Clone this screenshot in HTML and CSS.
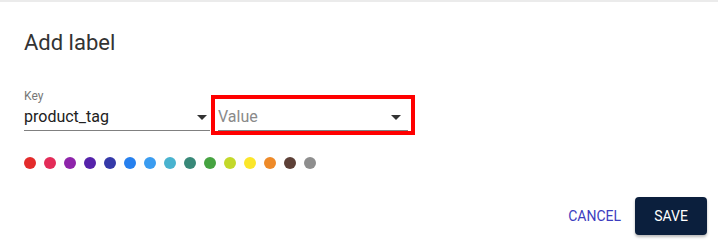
FILE: index.html
```html
<!DOCTYPE html>
<html>
<head>
<meta charset="utf-8">
<link rel="stylesheet" href="styles.css">
</head>
<body>
<div class="dialog">
  <h2 class="title">Add label</h2>
  <div class="fields">
    <div class="field key-field">
      <div class="field-label">Key</div>
      <div class="input-row">
        <span class="input-text">product_tag</span>
        <svg class="arrow" width="10" height="5" viewBox="0 0 10 5"><path d="M0 0L5 5L10 0Z" fill="#333"/></svg>
      </div>
    </div>
    <div class="value-wrap">
      <div class="input-row value-row">
        <span class="input-text placeholder">Value</span>
        <svg class="arrow value-arrow" width="10" height="5" viewBox="0 0 10 5"><path d="M0 0L5 5L10 0Z" fill="#333"/></svg>
      </div>
    </div>
  </div>
  <div class="colors">
    <span class="dot c1"></span>
    <span class="dot c2"></span>
    <span class="dot c3"></span>
    <span class="dot c4"></span>
    <span class="dot c5"></span>
    <span class="dot c6"></span>
    <span class="dot c7"></span>
    <span class="dot c8"></span>
    <span class="dot c9"></span>
    <span class="dot c10"></span>
    <span class="dot c11"></span>
    <span class="dot c12"></span>
    <span class="dot c13"></span>
    <span class="dot c14"></span>
    <span class="dot c15"></span>
  </div>
  <div class="actions">
    <button class="btn btn-text">CANCEL</button>
    <button class="btn btn-primary">SAVE</button>
  </div>
</div>
</body>
</html>
```
FILE: styles.css
```css
* { box-sizing: border-box; }
html, body { margin: 0; padding: 0; background: #fff; }
body {
  font-family: Roboto, "Liberation Sans", sans-serif;
  width: 718px;
  height: 244px;
  overflow: hidden;
}
.dialog {
  border-top: 2px solid #ebebeb;
  height: 244px;
}
.title {
  margin: 0;
  padding: 28px 24px 0;
  font-size: 22px;
  line-height: 26px;
  font-weight: 400;
  color: #333;
}
.fields {
  display: flex;
  align-items: flex-start;
  margin-top: 33px;
  padding-left: 24px;
}
.field { display: flex; flex-direction: column; }
.key-field { width: 186px; margin-right: 1px; }
.field-label {
  font-size: 12px;
  line-height: 14px;
  color: #777;
}
.input-row {
  display: flex;
  align-items: flex-start;
  padding: 4px 0 4px;
  border-bottom: 1px solid #808080;
}
.input-text {
  flex: 1;
  font-size: 16px;
  line-height: 19px;
  color: #212121;
}
.placeholder { color: #8a8a8a; }
.arrow { margin-top: 8px; margin-right: 3px; flex: none; }
.value-arrow { margin-right: 7px; }
.value-wrap {
  margin-top: 6px;
  width: 204px;
  border: 4px solid #ff0000;
  padding: 0 3px;
}
.value-row { padding-top: 8px; }
.colors {
  display: flex;
  gap: 8px;
  padding-left: 24px;
  margin-top: 22px;
}
.dot {
  width: 12px;
  height: 12px;
  border-radius: 50%;
  flex: none;
}
.c1 { background: #e32b2b; }
.c2 { background: #e32c58; }
.c3 { background: #8e24aa; }
.c4 { background: #5522aa; }
.c5 { background: #3539a8; }
.c6 { background: #2680ee; }
.c7 { background: #3a9cf0; }
.c8 { background: #49b3cf; }
.c9 { background: #388878; }
.c10 { background: #46a341; }
.c11 { background: #c3d82a; }
.c12 { background: #fbe62a; }
.c13 { background: #ee8a28; }
.c14 { background: #5d4037; }
.c15 { background: #8e8e8e; }
.actions {
  display: flex;
  justify-content: flex-end;
  align-items: center;
  gap: 6px;
  margin-top: 28px;
  padding-right: 11px;
}
.btn {
  font-family: Roboto, "Liberation Sans", sans-serif;
  font-size: 14px;
  line-height: 16px;
  border: none;
  background: none;
  cursor: pointer;
  margin: 0;
}
.btn-text {
  color: #3d3dbf;
  padding: 11px 8px;
}
.btn-primary {
  background: #0b1f3d;
  color: #fff;
  width: 72px;
  height: 38px;
  padding: 0;
  border-radius: 4px;
  box-shadow: 0 2px 3px rgba(0,0,0,0.28);
}
```
